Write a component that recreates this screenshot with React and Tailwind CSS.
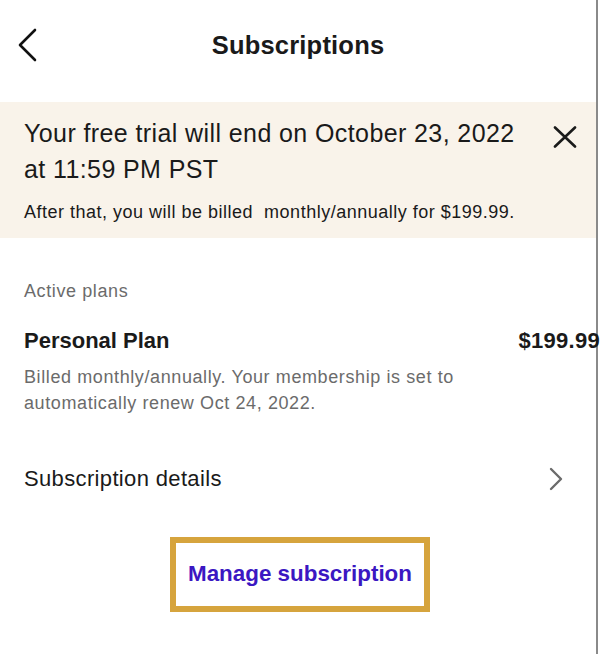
export default function App() {
  return (
    <div
      className="w-[600px] h-[654px] bg-white overflow-hidden"
      style={{ fontFamily: "'Liberation Sans', Arial, sans-serif" }}
    >
      <div className="w-[598px] h-full border-r-2 border-[#8a8a8a] flex flex-col">
        {/* Header */}
        <div className="h-[102px] relative">
          <button className="absolute left-[17px] top-[28px] text-[#111]">
            <svg width="22" height="34" viewBox="0 0 22 34" fill="none">
              <polyline
                points="18,2 3,17 18,32"
                stroke="currentColor"
                strokeWidth="2.6"
                strokeLinecap="round"
                strokeLinejoin="round"
              />
            </svg>
          </button>
          <h1 className="w-full text-center text-[25.5px] leading-[30px] pt-[30px] font-bold text-[#1a1a1a] tracking-[0.2px]">
            Subscriptions
          </h1>
        </div>

        {/* Trial banner */}
        <div className="bg-[#f9f3ea] h-[136px] pl-[24px] pr-[19px] pt-[13px] flex">
          <div className="flex-1">
            <p className="text-[25px] leading-[36px] text-[#1a1a1a] tracking-[0.4px]">
              Your free trial will end on October 23, 2022
              <br />
              at 11:59 PM PST
            </p>
            <p className="text-[18px] leading-[22px] text-[#1a1a1a] mt-[14px] tracking-[0.5px]">
              After that, you will be billed&nbsp; monthly/annually for $199.99.
            </p>
          </div>
          <button className="h-[24px] mt-[10px] text-[#1a1a1a]">
            <svg width="24" height="22" viewBox="0 0 24 22" fill="none">
              <path
                d="M2 1.5 L22 20.5 M22 1.5 L2 20.5"
                stroke="currentColor"
                strokeWidth="2.6"
                strokeLinecap="round"
              />
            </svg>
          </button>
        </div>

        {/* Active plans */}
        <div className="pl-[24px] pt-[42px]">
          <p className="text-[18px] leading-[22px] text-[#6b6b6b] tracking-[0.6px]">Active plans</p>
          <div className="flex justify-between items-center mt-[26px]">
            <p className="text-[22px] leading-[26px] font-bold text-[#1a1a1a]">Personal Plan</p>
            <p className="text-[22px] leading-[26px] font-bold text-[#1a1a1a] -mr-[4px] tracking-[0.3px]">$199.99</p>
          </div>
          <p className="text-[18px] leading-[26px] text-[#6b6b6b] mt-[10px] tracking-[0.6px]">
            Billed monthly/annually. Your membership is set to
            <br />
            automatically renew Oct 24, 2022.
          </p>
        </div>

        {/* Subscription details */}
        <div className="flex items-center justify-between pl-[24px] pr-[32px] mt-[50px]">
          <p className="text-[22px] leading-[26px] text-[#1a1a1a] tracking-[0.35px]">Subscription details</p>
          <svg width="16" height="24" viewBox="0 0 16 24" fill="none" className="text-[#6b6b6b]">
            <polyline
              points="3,2 13,12 3,22"
              stroke="currentColor"
              strokeWidth="2.4"
              strokeLinecap="round"
              strokeLinejoin="round"
            />
          </svg>
        </div>

        {/* Manage button */}
        <div className="flex justify-center mt-[45px] pl-[4px]">
          <button className="w-[260px] h-[75px] border-[6px] border-[#d6a43d] text-[22.4px] font-bold text-[#3b17c2] pb-[2px]">
            Manage subscription
          </button>
        </div>
      </div>
    </div>
  );
}
